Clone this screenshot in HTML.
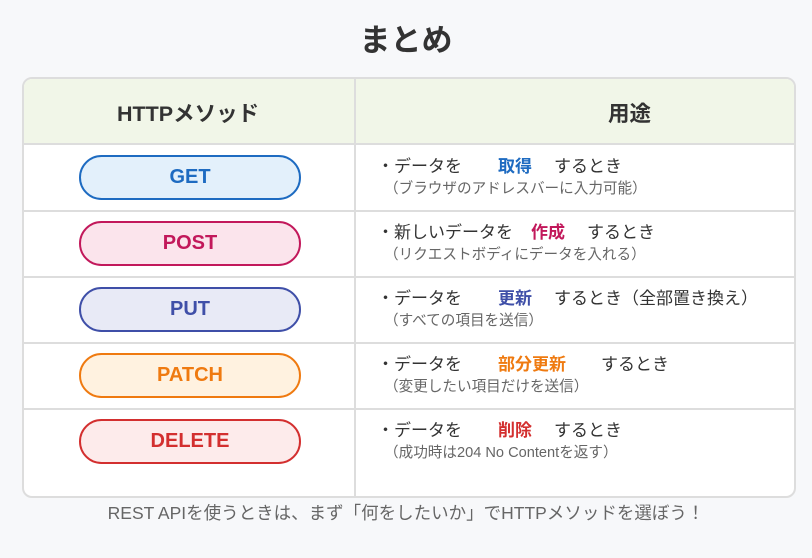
<!DOCTYPE html>
<html><head><meta charset="utf-8"><style>
*{margin:0;padding:0;box-sizing:border-box}
body{width:812px;height:558px;background:#f7f8fa;font-family:"Liberation Sans","Noto Sans CJK JP",sans-serif;position:relative;overflow:hidden;color:#333}
h1{position:absolute;top:15px;left:0;width:812px;text-align:center;font-size:31px;font-weight:bold;color:#333}
.tbl{position:absolute;left:22px;top:77px;width:774px;height:421px;border:2px solid #ddd;border-radius:10px;background:#fff;overflow:hidden}
.hdr{position:absolute;left:0;top:0;width:100%;height:66px;background:#f1f6e8;border-bottom:2px solid #ddd}
.vl{position:absolute;left:330px;top:0;width:2px;height:100%;background:#ddd}
.hl{position:absolute;left:0;width:100%;height:2px;background:#ddd}
.ht{position:absolute;top:18px;font-size:21.5px;font-weight:bold;color:#333}
.pill{position:absolute;left:55px;width:222px;height:45px;border:2px solid;border-radius:23px;text-align:center;line-height:41px;font-size:20px;font-weight:bold}
.t{position:absolute;left:353px;font-size:17px;color:#333;white-space:nowrap}
.s{position:absolute;left:360px;font-size:14.6px;color:#666;white-space:nowrap}
.t b{position:absolute;top:0}
.foot{position:absolute;top:500px;left:0;width:812px;text-align:center;font-size:17.5px;color:#666}
</style></head><body>
<h1>まとめ</h1>
<div class="tbl">
<div class="hdr"></div>
<div class="vl"></div>
<div class="hl" style="top:131px"></div>
<div class="hl" style="top:197px"></div>
<div class="hl" style="top:263px"></div>
<div class="hl" style="top:329px"></div>
<div class="ht" style="left:93px">HTTPメソッド</div>
<div class="ht" style="left:584px">用途</div>

<div class="pill" style="top:76px;border-color:#1e6bc1;background:#e3f0fb;color:#1e6bc1">GET</div>
<div class="pill" style="top:142px;border-color:#c2185b;background:#fbe4ec;color:#c2185b">POST</div>
<div class="pill" style="top:208px;border-color:#3f4fa8;background:#e8eaf6;color:#3f4fa8">PUT</div>
<div class="pill" style="top:274px;border-color:#ef7a10;background:#fff2e0;color:#ef7a10">PATCH</div>
<div class="pill" style="top:340px;border-color:#d32f2f;background:#fdebeb;color:#d32f2f">DELETE</div>

<div class="t" style="top:73px">・データを<b style="left:121px;color:#1e6bc1">取得</b><span style="position:absolute;left:177px">するとき</span></div>
<div class="s" style="top:98px">（ブラウザのアドレスバーに入力可能）</div>
<div class="t" style="top:139px">・新しいデータを<b style="left:154px;color:#c2185b">作成</b><span style="position:absolute;left:210px">するとき</span></div>
<div class="s" style="top:164px">（リクエストボディにデータを入れる）</div>
<div class="t" style="top:205px">・データを<b style="left:121px;color:#3f4fa8">更新</b><span style="position:absolute;left:177px">するとき（全部置き換え）</span></div>
<div class="s" style="top:230px">（すべての項目を送信）</div>
<div class="t" style="top:271px">・データを<b style="left:121px;color:#ef7a10">部分更新</b><span style="position:absolute;left:224px">するとき</span></div>
<div class="s" style="top:296px">（変更したい項目だけを送信）</div>
<div class="t" style="top:337px">・データを<b style="left:121px;color:#d32f2f">削除</b><span style="position:absolute;left:177px">するとき</span></div>
<div class="s" style="top:362px">（成功時は204 No Contentを返す）</div>
</div>
<div class="foot">REST APIを使うときは、まず「何をしたいか」でHTTPメソッドを選ぼう！</div>
</body></html>
